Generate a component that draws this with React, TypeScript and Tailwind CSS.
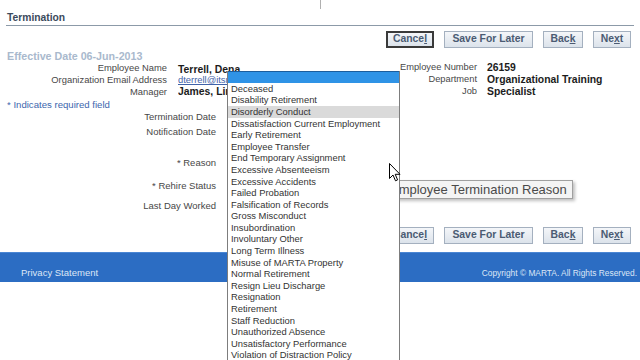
import React from "react";

const reasons = [
  "Deceased",
  "Disability Retirement",
  "Disorderly Conduct",
  "Dissatisfaction Current Employment",
  "Early Retirement",
  "Employee Transfer",
  "End Temporary Assignment",
  "Excessive Absenteeism",
  "Excessive Accidents",
  "Failed Probation",
  "Falsification of Records",
  "Gross Misconduct",
  "Insubordination",
  "Involuntary Other",
  "Long Term Illness",
  "Misuse of MARTA Property",
  "Normal Retirement",
  "Resign Lieu Discharge",
  "Resignation",
  "Retirement",
  "Staff Reduction",
  "Unauthorized Absence",
  "Unsatisfactory Performance",
  "Violation of Distraction Policy",
];

function Btn({ children, w, focused }: { children: React.ReactNode; w: string; focused?: boolean }) {
  return (
    <button
      className={`${w} h-[17px] flex items-center justify-center text-[10.4px] font-bold leading-none text-[#4b5b73] bg-gradient-to-b from-[#f4f6f9] to-[#dce3eb] ${
        focused ? "border-2 border-[#3a3a3a]" : "border border-[#a4b0bf]"
      }`}
    >
      {children}
    </button>
  );
}

function ButtonRow({ focused }: { focused?: boolean }) {
  return (
    <div className="flex justify-end gap-[10px] pr-[9px]">
      <Btn w="w-[48px]" focused={focused}>
        Cance<u>l</u>
      </Btn>
      <Btn w="w-[89px]">Save For Later</Btn>
      <Btn w="w-[40px]">
        Bac<u>k</u>
      </Btn>
      <Btn w="w-[38px]">
        Ne<u>x</u>t
      </Btn>
    </div>
  );
}

function InfoRow({ l1, v1, l2, v2 }: { l1: string; v1: React.ReactNode; l2: string; v2: string }) {
  return (
    <div className="flex h-[12px] items-center whitespace-nowrap">
      <span className="w-[167px] text-right text-[9.4px] text-[#474747]">{l1}</span>
      <span className="ml-[11px] w-[212px]">{v1}</span>
      <span className="w-[87px] text-right text-[9.3px] text-[#474747]">{l2}</span>
      <span className="ml-[10px] text-[10.4px] font-bold text-[#1c1c1c]">{v2}</span>
    </div>
  );
}

function FormLabel({ text, mt }: { text: string; mt: string }) {
  return (
    <div className={`${mt} flex h-[12px] items-center`}>
      <span className="w-[216px] text-right text-[9.5px] text-[#474747]">{text}</span>
    </div>
  );
}

export default function App() {
  return (
    <div className="relative h-[360px] w-[640px] overflow-hidden bg-white font-['Liberation_Sans',Arial,sans-serif]">
      <div className="h-[10px] pl-[320px]">
        <div className="h-[9px] w-px bg-[#b0b0b0]" />
      </div>

      <div className="mx-[6px] border-b border-[#8c9aa8] pb-px pl-px pt-[2px]">
        <div className="text-[10.3px] font-bold leading-[12px] text-[#3c4a5c]">Termination</div>
      </div>

      <div className="mt-[5px]">
        <ButtonRow focused />
      </div>

      <div className="mt-[2px] h-[12px] pl-[7px] text-[10.7px] font-bold leading-[12px] text-[#a9b9cd]">
        Effective Date 06-Jun-2013
      </div>

      <InfoRow
        l1="Employee Name"
        v1={<span className="text-[10.4px] font-bold text-[#1c1c1c]">Terrell, Dena</span>}
        l2="Employee Number"
        v2="26159"
      />
      <InfoRow
        l1="Organization Email Address"
        v1={
          <span className="block w-[49px] overflow-hidden text-[9.4px] text-[#3f62a8] underline">
            dterrell@itsmarta.com
          </span>
        }
        l2="Department"
        v2="Organizational Training"
      />
      <InfoRow
        l1="Manager"
        v1={
          <span className="block w-[49px] overflow-hidden text-[10.4px] font-bold text-[#1c1c1c]">
            James, Linda
          </span>
        }
        l2="Job"
        v2="Specialist"
      />

      <div className="mt-[2px] flex h-[11px] items-center pl-[7px] text-[9.6px] text-[#3d66ad]">
        * Indicates required field
      </div>

      <FormLabel mt="mt-0" text="Termination Date" />
      <FormLabel mt="mt-[3px]" text="Notification Date" />
      <FormLabel mt="mt-[19px]" text="* Reason" />
      <FormLabel mt="mt-[11px]" text="* Rehire Status" />
      <FormLabel mt="mt-[8px]" text="Last Day Worked" />

      <div className="mt-[15px]">
        <ButtonRow />
      </div>

      <div className="mt-[8px] flex h-[30px] items-end justify-between border-t border-[#4a86d4] bg-[#2c6dc3] pb-[3px]">
        <span className="pl-[21px] text-[9.5px] leading-[12px] text-[#dce6f6]">Privacy Statement</span>
        <span className="pr-[3px] text-[8.4px] leading-[12px] text-[#dce6f6]">
          Copyright © MARTA. All Rights Reserved.
        </span>
      </div>

      {/* tooltip behind the open list */}
      <div className="absolute left-[385px] top-[180px] z-10 flex h-[19px] w-[188px] items-center border border-[#a0a0a0] bg-[#f4f4f4] pl-[4px] text-[13px] text-[#4a4a4a] shadow-[2px_2px_3px_rgba(0,0,0,0.25)]">
        Employee Termination Reason
      </div>

      {/* open select list */}
      <div className="absolute left-[227px] top-[71px] z-20 w-[173px] border-x border-[#7d7d7d] bg-white">
        <div className="h-[12px] border-t border-[#1c5d9c] bg-[#2f93e6]" />
        {reasons.map((r) => (
          <div
            key={r}
            className={`flex h-[11.6px] items-center whitespace-nowrap pl-[3px] text-[9.4px] text-[#333] ${
              r === "Disorderly Conduct" ? "bg-[#dadada]" : ""
            }`}
          >
            {r}
          </div>
        ))}
      </div>

      {/* mouse pointer */}
      <svg className="absolute left-[389px] top-[163px] z-30" width="12" height="19" viewBox="0 0 12 19">
        <path d="M0.5 0.5 L0.5 15.5 L4 12 L6.5 17.8 L8.6 16.9 L6.2 11.3 L11 11.3 Z" fill="white" stroke="black" strokeWidth="1" strokeLinejoin="round" />
      </svg>
    </div>
  );
}
